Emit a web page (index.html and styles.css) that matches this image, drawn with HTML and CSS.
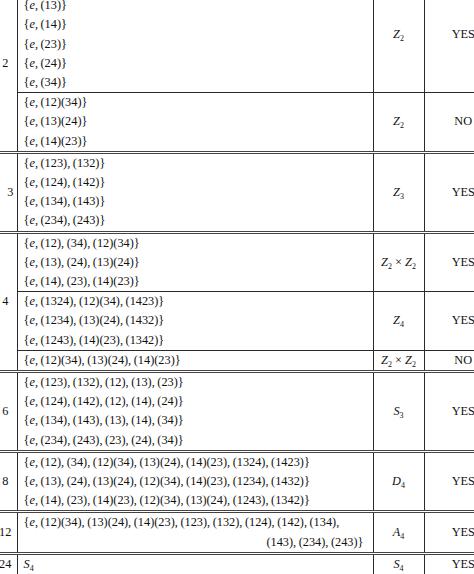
FILE: index.html
```html
<!DOCTYPE html>
<html lang="en">
<head>
<meta charset="utf-8">
<title>Subgroups of S4</title>
<link rel="stylesheet" href="styles.css">
</head>
<body>
<table class="subgroups">
  <colgroup>
    <col class="c-ord">
    <col class="c-els">
    <col class="c-iso">
    <col class="c-nrm">
  </colgroup>
  <tbody>
    <tr class="top">
      <td class="ord" rowspan="2">2</td>
      <td class="els">
        <div class="ln">{<i>e</i>, (12)}</div>
        <div class="ln">{<i>e</i>, (13)}</div>
        <div class="ln">{<i>e</i>, (14)}</div>
        <div class="ln">{<i>e</i>, (23)}</div>
        <div class="ln">{<i>e</i>, (24)}</div>
        <div class="ln">{<i>e</i>, (34)}</div>
      </td>
      <td class="iso"><i>Z</i><sub>2</sub></td>
      <td class="nrm">YES</td>
    </tr>
    <tr class="sub">
      <td class="els">
        <div class="ln">{<i>e</i>, (12)(34)}</div>
        <div class="ln">{<i>e</i>, (13)(24)}</div>
        <div class="ln">{<i>e</i>, (14)(23)}</div>
      </td>
      <td class="iso"><i>Z</i><sub>2</sub></td>
      <td class="nrm">NO</td>
    </tr>

    <tr class="grp">
      <td class="ord shift">3</td>
      <td class="els">
        <div class="ln">{<i>e</i>, (123), (132)}</div>
        <div class="ln">{<i>e</i>, (124), (142)}</div>
        <div class="ln">{<i>e</i>, (134), (143)}</div>
        <div class="ln">{<i>e</i>, (234), (243)}</div>
      </td>
      <td class="iso"><i>Z</i><sub>3</sub></td>
      <td class="nrm">YES</td>
    </tr>

    <tr class="grp">
      <td class="ord" rowspan="3">4</td>
      <td class="els">
        <div class="ln">{<i>e</i>, (12), (34), (12)(34)}</div>
        <div class="ln">{<i>e</i>, (13), (24), (13)(24)}</div>
        <div class="ln">{<i>e</i>, (14), (23), (14)(23)}</div>
      </td>
      <td class="iso"><i>Z</i><sub>2</sub> × <i>Z</i><sub>2</sub></td>
      <td class="nrm">YES</td>
    </tr>
    <tr class="sub">
      <td class="els">
        <div class="ln">{<i>e</i>, (1324), (12)(34), (1423)}</div>
        <div class="ln">{<i>e</i>, (1234), (13)(24), (1432)}</div>
        <div class="ln">{<i>e</i>, (1243), (14)(23), (1342)}</div>
      </td>
      <td class="iso"><i>Z</i><sub>4</sub></td>
      <td class="nrm">YES</td>
    </tr>
    <tr class="sub">
      <td class="els">
        <div class="ln">{<i>e</i>, (12)(34), (13)(24), (14)(23)}</div>
      </td>
      <td class="iso"><i>Z</i><sub>2</sub> × <i>Z</i><sub>2</sub></td>
      <td class="nrm">NO</td>
    </tr>

    <tr class="grp">
      <td class="ord">6</td>
      <td class="els">
        <div class="ln">{<i>e</i>, (123), (132), (12), (13), (23)}</div>
        <div class="ln">{<i>e</i>, (124), (142), (12), (14), (24)}</div>
        <div class="ln">{<i>e</i>, (134), (143), (13), (14), (34)}</div>
        <div class="ln">{<i>e</i>, (234), (243), (23), (24), (34)}</div>
      </td>
      <td class="iso"><i>S</i><sub>3</sub></td>
      <td class="nrm">YES</td>
    </tr>

    <tr class="grp">
      <td class="ord">8</td>
      <td class="els">
        <div class="ln">{<i>e</i>, (12), (34), (12)(34), (13)(24), (14)(23), (1324), (1423)}</div>
        <div class="ln">{<i>e</i>, (13), (24), (13)(24), (12)(34), (14)(23), (1234), (1432)}</div>
        <div class="ln">{<i>e</i>, (14), (23), (14)(23), (12)(34), (13)(24), (1243), (1342)}</div>
      </td>
      <td class="iso"><i>D</i><sub>4</sub></td>
      <td class="nrm">YES</td>
    </tr>

    <tr class="grp">
      <td class="ord">12</td>
      <td class="els">
        <div class="ln">{<i>e</i>, (12)(34), (13)(24), (14)(23), (123), (132), (124), (142), (134),</div>
        <div class="ln right">(143), (234), (243)}</div>
      </td>
      <td class="iso"><i>A</i><sub>4</sub></td>
      <td class="nrm">YES</td>
    </tr>

    <tr class="grp">
      <td class="ord">24</td>
      <td class="els">
        <div class="ln"><i>S</i><sub>4</sub></div>
      </td>
      <td class="iso"><i>S</i><sub>4</sub></td>
      <td class="nrm">YES</td>
    </tr>
  </tbody>
</table>
</body>
</html>
```

FILE: styles.css
```css
html, body {
  margin: 0;
  padding: 0;
  overflow: hidden;
  background: #ffffff;
}

body {
  font-family: "Liberation Serif", "Times New Roman", serif;
  font-size: 12.3px;
  color: #111111;
}

.subgroups {
  border-collapse: collapse;
  table-layout: fixed;
  width: 508px;
  margin: -23px 0 0 -6px;
}

.c-ord { width: 23px; }
.c-els { width: 356px; }
.c-iso { width: 51px; }
.c-nrm { width: 78px; }

.subgroups td {
  padding: 0;
  line-height: 19.2px;
  vertical-align: middle;
}

.subgroups td.ord {
  text-align: center;
}

.subgroups td.ord.shift {
  padding-left: 10px;
}

.subgroups td.els {
  padding: 0 9px 0 6px;
  border-left: 1px solid #2a2a2a;
}

.subgroups td.iso,
.subgroups td.nrm {
  text-align: center;
  border-left: 1px solid #2a2a2a;
}

.subgroups tr.grp > td {
  border-top: 3px double #444444;
}

.subgroups tr.sub > td {
  border-top: 1px solid #2a2a2a;
}

.ln {
  white-space: nowrap;
  word-spacing: -0.5px;
}

.ln.right {
  text-align: right;
}

.subgroups i {
  font-style: italic;
}

.subgroups sub {
  font-size: 8px;
  line-height: 0;
  vertical-align: -3px;
}
```
